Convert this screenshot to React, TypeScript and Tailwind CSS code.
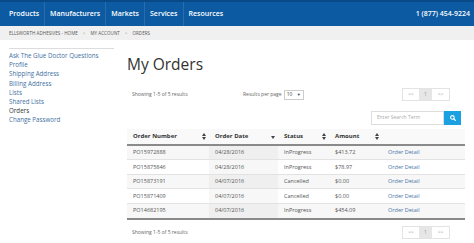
import React from "react";

type Order = {
  number: string;
  date: string;
  status: string;
  amount: string;
};

const orders: Order[] = [
  { number: "PO15972888", date: "04/28/2016", status: "InProgress", amount: "$413.72" },
  { number: "PO15875846", date: "04/28/2016", status: "InProgress", amount: "$78.97" },
  { number: "PO15873191", date: "04/07/2016", status: "Cancelled", amount: "$0.00" },
  { number: "PO15871409", date: "04/07/2016", status: "Cancelled", amount: "$0.00" },
  { number: "PO14682195", date: "04/07/2016", status: "InProgress", amount: "$454.09" },
];

const navItems = ["Products", "Manufacturers", "Markets", "Services", "Resources"];

const sideLinks = [
  "Ask The Glue Doctor Questions",
  "Profile",
  "Shipping Address",
  "Billing Address",
  "Lists",
  "Shared Lists",
  "Orders",
  "Change Password",
];

const SortBoth = () => (
  <svg width="4" height="7" viewBox="0 0 4 7" className="inline-block">
    <path d="M2 0L4 3H0z" fill="#444" />
    <path d="M2 7L4 4H0z" fill="#444" />
  </svg>
);

const SortDown = () => (
  <svg width="4" height="4" viewBox="0 0 4 4" className="inline-block">
    <path d="M0 1H4L2 4z" fill="#444" />
  </svg>
);

const Pager = () => (
  <div className="flex h-[13px] border border-[#e3e3e3] text-[5px] text-[#999]">
    <div className="w-[16px] flex items-center justify-center">&lt;&lt;</div>
    <div className="w-[13px] flex items-center justify-center bg-[#e6e6e6]">1</div>
    <div className="w-[17px] flex items-center justify-center">&gt;&gt;</div>
  </div>
);

const App = () => {
  return (
    <div className="w-[474px] h-[243px] overflow-hidden bg-white font-['Open_Sans',sans-serif]">
      {/* top navigation */}
      <div className="h-[26px] bg-[#0b5aa2] border-t-2 border-[#0a4988] flex items-center justify-between pr-[4px]">
        <div className="flex items-center h-full">
          {navItems.map((item, i) => (
            <div
              key={item}
              className={
                "h-full flex items-center px-[5px] text-[7px] font-semibold text-white " +
                (i > 0 ? "border-l border-[#2a6bab]" : "pl-[9px]")
              }
            >
              {item}
            </div>
          ))}
        </div>
        <div className="text-[7px] font-semibold text-white">1 (877) 454-9224</div>
      </div>

      {/* breadcrumb */}
      <div className="h-[14px] bg-[#f0f0f0] flex items-center pl-[9px] text-[4.5px] text-[#555] uppercase tracking-[0.05px]">
        <span>Ellsworth Adhesives - Home</span>
        <span className="mx-[5px] text-[#999]">&gt;</span>
        <span>My Account</span>
        <span className="mx-[5px] text-[#999]">&gt;</span>
        <span>Orders</span>
      </div>

      <div className="flex">
        {/* sidebar */}
        <div className="w-[118px] pl-[9px] pt-[8px]">
          <div className="w-[105px] border-t border-[#ddd]" />
          <ul className="pt-[2px] text-[6.2px] leading-[9.2px]">
            {sideLinks.map((l) => (
              <li key={l} className={l === "Orders" ? "text-[#333]" : "text-[#42709f]"}>
                {l}
              </li>
            ))}
          </ul>
        </div>

        {/* main */}
        <div className="w-[338px] ml-[9px]">
          <h1 className="mt-[14px] text-[15.5px] leading-[20px] text-[#333] font-normal">My Orders</h1>

          <div className="mt-[14px] flex items-center h-[13px]">
            <div className="ml-[5px] w-[111px] text-[5px] text-[#666]">Showing 1-5 of 5 results</div>
            <div className="flex items-center text-[5px] text-[#666]">
              <span>Results per page</span>
              <div className="ml-[2px] h-[10px] w-[20px] border border-[#ccc] flex items-center justify-between px-[2px] text-[5px] text-[#444]">
                <span>10</span>
                <span className="text-[4px]">▼</span>
              </div>
            </div>
            <div className="ml-auto mr-[15px]">
              <Pager />
            </div>
          </div>

          <div className="mt-[10px] flex justify-end mr-[4px]">
            <div className="flex h-[14px]">
              <div className="w-[73px] border border-[#ddd] flex items-center pl-[5px] text-[5px] text-[#aaa]">
                Enter Search Term
              </div>
              <div className="w-[17px] bg-[#1ba1e2] flex items-center justify-center">
                <svg width="6" height="6" viewBox="0 0 10 10">
                  <circle cx="4" cy="4" r="3" stroke="white" strokeWidth="1.8" fill="none" />
                  <path d="M6.2 6.2L9 9" stroke="white" strokeWidth="2" strokeLinecap="round" />
                </svg>
              </div>
            </div>
          </div>

          <table className="mt-[4px] w-[338px] table-fixed border-collapse text-[5.5px]">
            <colgroup>
              <col className="w-[82px]" />
              <col className="w-[69px]" />
              <col className="w-[51px]" />
              <col className="w-[53px]" />
              <col className="w-[83px]" />
            </colgroup>
            <thead>
              <tr className="h-[16px] bg-[#f9f9f9] border-b-[2px] border-[#8a8a8a] text-[6px] font-semibold text-[#333]">
                <th className="text-left pl-[6px] pr-[3px]">
                  <div className="flex justify-between items-center">
                    <span>Order Number</span>
                    <SortBoth />
                  </div>
                </th>
                <th className="text-left pl-[6px] pr-[3px]">
                  <div className="flex justify-between items-center">
                    <span>Order Date</span>
                    <SortDown />
                  </div>
                </th>
                <th className="text-left pl-[6px] pr-[3px]">
                  <div className="flex justify-between items-center">
                    <span>Status</span>
                    <SortBoth />
                  </div>
                </th>
                <th className="text-left pl-[6px] pr-[3px]">
                  <div className="flex justify-between items-center">
                    <span>Amount</span>
                    <SortBoth />
                  </div>
                </th>
                <th />
              </tr>
            </thead>
            <tbody className="text-[#555]">
              {orders.map((o, i) => (
                <tr
                  key={o.number}
                  className={
                    "h-[14.5px] border-[#e2e2e2] " +
                    (i % 2 === 0 ? "bg-[#f7f7f7]" : "bg-white") +
                    (i < orders.length - 1 ? " border-b" : "")
                  }
                >
                  <td className="pl-[6px]">{o.number}</td>
                  <td className={"pl-[6px] " + (i % 2 === 0 ? "bg-[#efefef]" : "bg-[#f7f7f7]")}>{o.date}</td>
                  <td className="pl-[6px]">{o.status}</td>
                  <td className="pl-[6px]">{o.amount}</td>
                  <td className="pl-[6px] text-[#4a76a8]">Order Detail</td>
                </tr>
              ))}
            </tbody>
          </table>
          <div className="border-t-[2px] border-[#8a8a8a] w-[338px]" />

          <div className="mt-[6px] flex items-center h-[14px]">
            <div className="ml-[5px] text-[5px] text-[#666]">Showing 1-5 of 5 results</div>
            <div className="ml-auto mr-[15px]">
              <Pager />
            </div>
          </div>
        </div>
      </div>
    </div>
  );
};

export default App;
